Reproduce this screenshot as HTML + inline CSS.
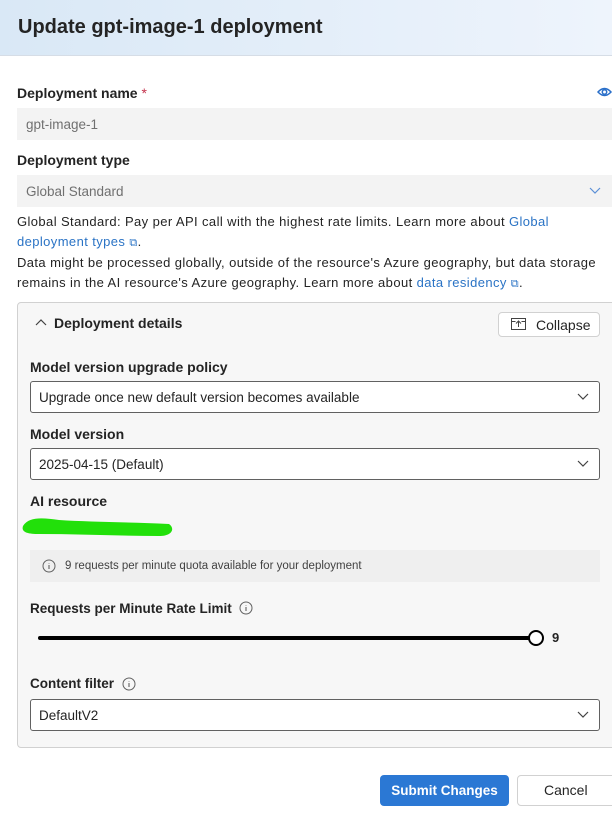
<!DOCTYPE html>
<html><head><style>
*{box-sizing:border-box;margin:0;padding:0}
body{width:612px;height:828px;overflow:hidden;background:#fff;font-family:"Liberation Sans",sans-serif;color:#242424;position:relative}
.a{position:absolute}
.hdr{left:0;top:0;width:612px;height:56px;background:linear-gradient(90deg,#d9e8f6,#eef4fc);border-bottom:1px solid #d6dde6}
.lbl{font-size:14px;font-weight:bold;color:#242424}
.in{background:#f3f3f3;height:32px;font-size:13.5px;color:#707070;padding:9px 9px;left:17px;width:600px}
.sel{background:#fff;border:1px solid #616161;border-radius:3px;height:32px;left:30px;width:570px;font-size:13.5px;padding:8px 8px;color:#242424}
.chev{position:absolute;right:10px;top:11px}
.t{font-size:13px;line-height:20px;left:17px;width:600px;white-space:nowrap;letter-spacing:0.4px}
a{color:#2a73c5;text-decoration:none}
</style></head><body>
<div class="a hdr"></div>
<div class="a" style="left:18px;top:16px;font-size:20px;font-weight:bold;color:#242424">Update gpt-image-1 deployment</div>

<div class="a lbl" style="left:17px;top:85px">Deployment name<span style="color:#c4314b;font-weight:normal"> *</span></div>
<svg class="a" style="left:597px;top:86px" width="15" height="12" viewBox="0 0 15 12"><path d="M1 6 Q7.5 -1 14 6 Q7.5 13 1 6Z" fill="none" stroke="#2a6fc9" stroke-width="1.5"/><circle cx="7.5" cy="6" r="2.2" fill="none" stroke="#2a6fc9" stroke-width="1.5"/></svg>
<div class="a in" style="top:108px">gpt-image-1</div>
<div class="a lbl" style="left:17px;top:152px">Deployment type</div>
<div class="a in" style="top:175px">Global Standard
<svg class="chev" width="12" height="8" viewBox="0 0 12 8" style="right:16px;top:12px"><path d="M1 1l5 5 5-5" fill="none" stroke="#5b8fd6" stroke-width="1.2"/></svg></div>
<div class="a t" style="top:212px">Global Standard: Pay per API call with the highest rate limits. Learn more about <a>Global</a><br><a>deployment types</a> <span style="color:#2a73c5;font-size:11px">⧉</span>.<br>Data might be processed globally, outside of the resource's Azure geography, but data storage<br>remains in the AI resource's Azure geography. Learn more about <a>data residency</a> <span style="color:#2a73c5;font-size:11px">⧉</span>.</div>

<div class="a" style="left:17px;top:302px;width:610px;height:446px;background:#f7f7f7;border:1px solid #d1d1d1;border-radius:4px"></div>
<svg class="a" style="left:35px;top:318px" width="12" height="8" viewBox="0 0 12 8"><path d="M1 7l5-5 5 5" fill="none" stroke="#424242" stroke-width="1.2"/></svg>
<div class="a lbl" style="left:54px;top:315px;font-size:14px">Deployment details</div>
<div class="a" style="left:498px;top:312px;width:102px;height:25px;background:#fff;border:1px solid #d1d1d1;border-radius:4px;font-size:14px;padding:4px 0 0 37px">Collapse</div>
<svg class="a" style="left:511px;top:318px" width="15" height="12" viewBox="0 0 15 12"><rect x="0.5" y="0.5" width="14" height="11" fill="none" stroke="#424242"/><path d="M0.5 3.5h4M10.5 3.5h4M7.5 9V3M5 5.5l2.5-2.5 2.5 2.5" fill="none" stroke="#424242"/></svg>

<div class="a lbl" style="left:30px;top:359px">Model version upgrade policy</div>
<div class="a sel" style="top:381px">Upgrade once new default version becomes available<svg class="chev" width="12" height="8" viewBox="0 0 12 8"><path d="M1 1l5 5 5-5" fill="none" stroke="#424242" stroke-width="1.2"/></svg></div>
<div class="a lbl" style="left:30px;top:426px">Model version</div>
<div class="a sel" style="top:448px">2025-04-15 (Default)<svg class="chev" width="12" height="8" viewBox="0 0 12 8"><path d="M1 1l5 5 5-5" fill="none" stroke="#424242" stroke-width="1.2"/></svg></div>
<div class="a lbl" style="left:30px;top:493px">AI resource</div>
<svg class="a" style="left:19px;top:512px" width="156" height="26" viewBox="0 0 156 26"><path d="M4 14 C10 4,25 6,40 8 C70 10,110 10,150 12 C156 16,154 24,140 24 C100 24,60 22,20 22 C8 22,2 20,4 14Z" fill="#22e00a"/></svg>
<div class="a" style="left:30px;top:550px;width:570px;height:32px;background:#efefef;font-size:11.5px;color:#424242;padding:10px 0 0 35px">9 requests per minute quota available for your deployment</div>
<svg class="a" style="left:42px;top:559px" width="14" height="14" viewBox="0 0 14 14"><circle cx="7" cy="7" r="6" fill="none" stroke="#616161"/><path d="M7 6v4M7 4v.5" stroke="#616161" stroke-width="1.1"/></svg>
<div class="a lbl" style="left:30px;top:601px;font-size:13.5px">Requests per Minute Rate Limit</div>
<svg class="a" style="left:239px;top:601px" width="14" height="14" viewBox="0 0 14 14"><circle cx="7" cy="7" r="6" fill="none" stroke="#616161"/><path d="M7 6v4M7 4v.5" stroke="#616161" stroke-width="1.1"/></svg>
<div class="a" style="left:38px;top:636px;width:492px;height:4px;background:#000;border-radius:2px"></div>
<div class="a" style="left:528px;top:630px;width:16px;height:16px;border:2px solid #000;border-radius:50%;background:#fff"></div>
<div class="a" style="left:552px;top:630px;font-size:13px;font-weight:bold">9</div>
<div class="a lbl" style="left:30px;top:676px;font-size:13.5px">Content filter</div>
<svg class="a" style="left:122px;top:677px" width="14" height="14" viewBox="0 0 14 14"><circle cx="7" cy="7" r="6" fill="none" stroke="#616161"/><path d="M7 6v4M7 4v.5" stroke="#616161" stroke-width="1.1"/></svg>
<div class="a sel" style="top:699px">DefaultV2<svg class="chev" width="12" height="8" viewBox="0 0 12 8"><path d="M1 1l5 5 5-5" fill="none" stroke="#424242" stroke-width="1.2"/></svg></div>

<div class="a" style="left:380px;top:775px;width:129px;height:31px;background:#2b78d4;border-radius:4px;color:#fff;font-size:13.5px;font-weight:bold;text-align:center;line-height:31px">Submit Changes</div>
<div class="a" style="left:517px;top:775px;width:100px;height:31px;background:#fff;border:1px solid #d1d1d1;border-radius:4px;font-size:14px;padding:0 0 0 26px;line-height:29px">Cancel</div>
</body></html>
